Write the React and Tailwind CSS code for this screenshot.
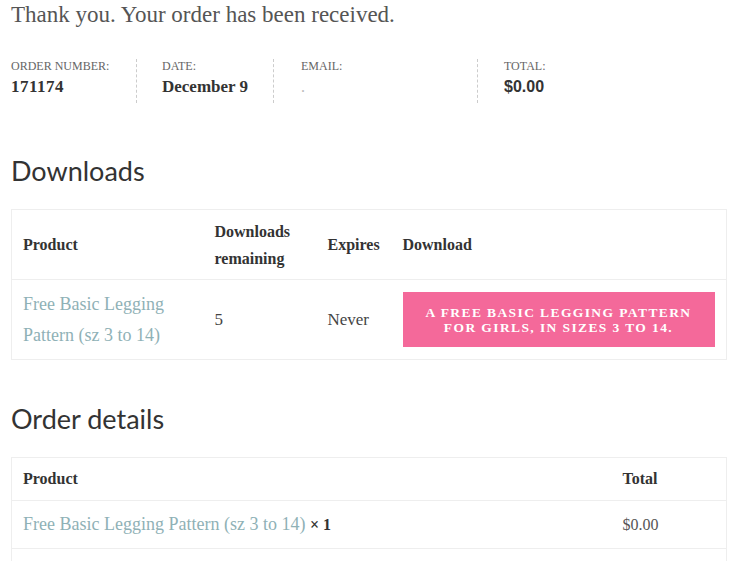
export default function App() {
  const serif = { fontFamily: '"Liberation Serif", "DejaVu Serif", serif' };
  const sans = { fontFamily: '"Lato", "Noto Sans", sans-serif' };
  return (
    <div className="min-h-[561px] bg-white text-[#444]" style={serif}>
      <div className="px-[11px]">
        <p className="pt-[1px] text-[23px] leading-[28px] text-[#555]">
          Thank you. Your order has been received.
        </p>

        <ul className="mt-[30px] flex">
          <li className="w-[126px] border-r border-dashed border-[#ccc] pb-[6px]">
            <div className="text-[12px] uppercase leading-[14px] text-[#666]">Order number:</div>
            <div className="mt-[4px] text-[17px] font-bold leading-[20px] tracking-[0.5px] text-[#333]">171174</div>
          </li>
          <li className="w-[137px] border-r border-dashed border-[#ccc] pl-[25px]">
            <div className="text-[12px] uppercase leading-[14px] text-[#666]">Date:</div>
            <div className="mt-[4px] text-[17px] font-bold leading-[20px] text-[#333]">December 9</div>
          </li>
          <li className="w-[204px] border-r border-dashed border-[#ccc] pl-[27px]">
            <div className="text-[12px] uppercase leading-[14px] text-[#666]">Email:</div>
            <div className="mt-[4px] text-[16px] leading-[20px] text-[#bbb]">.</div>
          </li>
          <li className="pl-[26px]">
            <div className="text-[12px] uppercase leading-[14px] text-[#666]">Total:</div>
            <div className="mt-[4px] text-[16px] font-bold leading-[20px] text-[#333]" style={{ fontFamily: '"Liberation Sans", sans-serif' }}>$0.00</div>
          </li>
        </ul>

        <h2 className="mt-[51px] text-[27px] leading-[34px] text-[#333]" style={sans}>
          Downloads
        </h2>

        <table className="mt-[21px] w-[716px] border-collapse border border-[#eee] text-[18px]">
          <thead>
            <tr className="border-b border-[#eee] text-left text-[16px] font-bold text-[#333]">
              <th className="h-[70px] w-[203px] pl-[11px] align-middle">Product</th>
              <th className="w-[113px] align-middle leading-[27px]">Downloads<br />remaining</th>
              <th className="w-[75px] align-middle">Expires</th>
              <th className="align-middle">Download</th>
            </tr>
          </thead>
          <tbody>
            <tr>
              <td className="h-[80px] pl-[11px] align-middle leading-[31px] text-[#8fb1b6]">
                Free Basic Legging<br />Pattern (sz 3 to 14)
              </td>
              <td className="align-middle text-[17px] text-[#444]">5</td>
              <td className="align-middle text-[17px] text-[#444]">Never</td>
              <td className="pr-[11px] align-middle">
                <a className="flex h-[55px] w-[312px] items-center justify-center bg-[#f4699a] text-center text-[13.5px] font-bold uppercase leading-[15px] tracking-[1.4px] text-white">
                  A free basic legging pattern<br />for girls, in sizes 3 to 14.
                </a>
              </td>
            </tr>
          </tbody>
        </table>

        <h2 className="mt-[42px] text-[27px] leading-[34px] text-[#333]" style={sans}>
          Order details
        </h2>

        <table className="mt-[21px] w-[716px] border-collapse border border-[#eee] text-[18px]">
          <thead>
            <tr className="border-b border-[#eee] text-left text-[16px] font-bold text-[#333]">
              <th className="h-[43px] pl-[11px] align-middle">Product</th>
              <th className="w-[104px] align-middle">Total</th>
            </tr>
          </thead>
          <tbody>
            <tr className="border-b border-[#eee]">
              <td className="h-[48px] pl-[11px] align-middle">
                <span className="text-[#8fb1b6]">Free Basic Legging Pattern (sz 3 to 14)</span>{' '}
                <strong className="text-[16px] text-[#333]">× 1</strong>
              </td>
              <td className="align-middle text-[16px] text-[#555]">$0.00</td>
            </tr>
            <tr>
              <td className="h-[48px]" colSpan={2}></td>
            </tr>
          </tbody>
        </table>
      </div>
    </div>
  );
}
